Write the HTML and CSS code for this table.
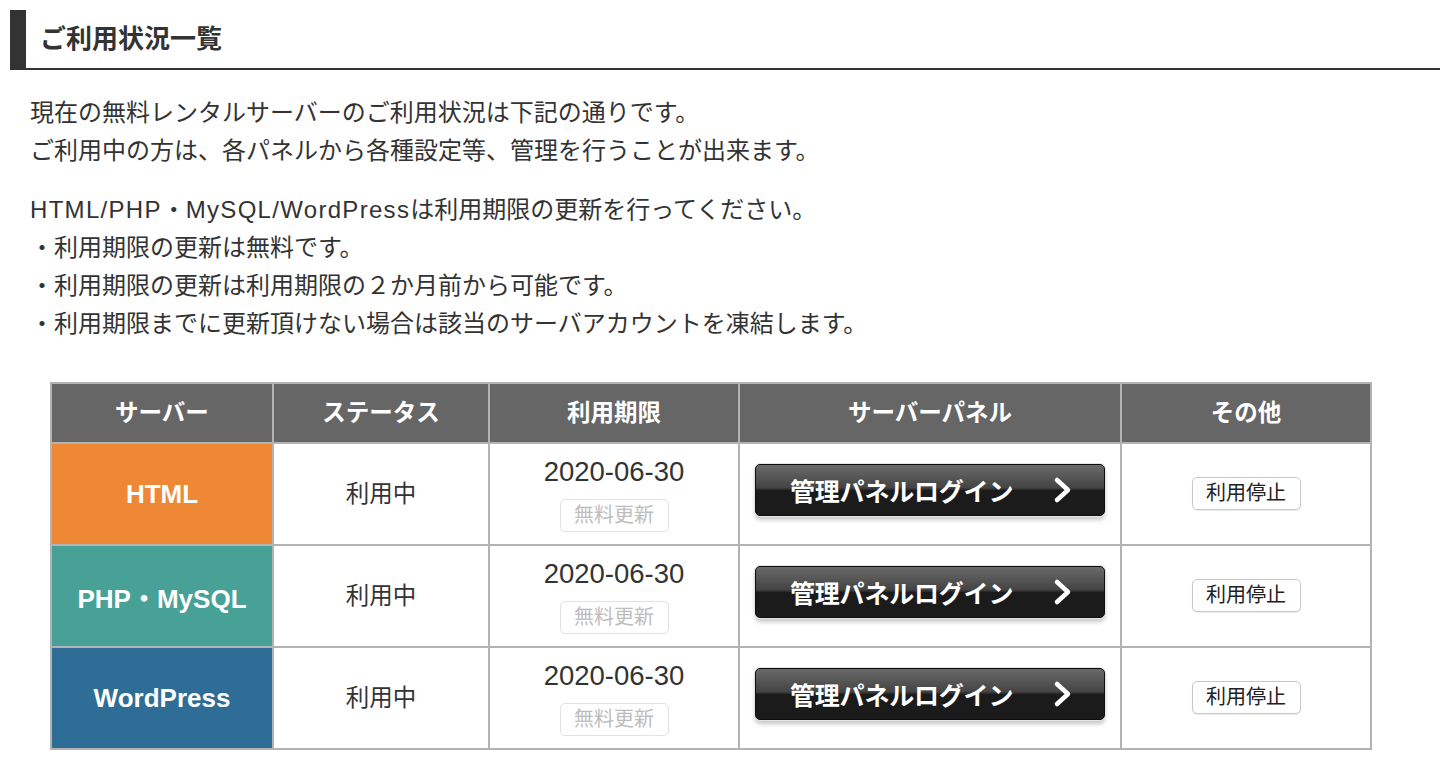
FILE: index.html
```html
<!DOCTYPE html>
<html lang="ja">
<head>
<meta charset="utf-8">
<title>ご利用状況一覧</title>
<link rel="stylesheet" href="styles.css">
</head>
<body>
<div class="page">
  <h2 class="heading">ご利用状況一覧</h2>
  <p class="lead">現在の無料レンタルサーバーのご利用状況は下記の通りです。<br>ご利用中の方は、各パネルから各種設定等、管理を行うことが出来ます。</p>
  <p class="lead second"><span class="latin">HTML/PHP</span>・<span class="latin">MySQL/WordPress</span>は利用期限の更新を行ってください。<br>・利用期限の更新は無料です。<br>・利用期限の更新は利用期限の２か月前から可能です。<br>・利用期限までに更新頂けない場合は該当のサーバアカウントを凍結します。</p>

  <table class="servers">
    <colgroup>
      <col class="c1"><col class="c2"><col class="c3"><col class="c4"><col class="c5">
    </colgroup>
    <thead>
      <tr><th>サーバー</th><th>ステータス</th><th>利用期限</th><th>サーバーパネル</th><th>その他</th></tr>
    </thead>
    <tbody>
      <tr>
        <td class="name html">HTML</td>
        <td class="status">利用中</td>
        <td class="limit"><div class="date">2020-06-30</div><button class="btn disabled" type="button">無料更新</button></td>
        <td class="panel"><a class="login" href="#"><span>管理パネルログイン</span><svg width="22" height="28" viewBox="0 0 22 28"><polyline points="5,4 16,14 5,24" fill="none" stroke="#fff" stroke-width="4.5" stroke-linecap="round" stroke-linejoin="round"/></svg></a></td>
        <td class="other"><button class="btn" type="button">利用停止</button></td>
      </tr>
      <tr>
        <td class="name php">PHP・MySQL</td>
        <td class="status">利用中</td>
        <td class="limit"><div class="date">2020-06-30</div><button class="btn disabled" type="button">無料更新</button></td>
        <td class="panel"><a class="login" href="#"><span>管理パネルログイン</span><svg width="22" height="28" viewBox="0 0 22 28"><polyline points="5,4 16,14 5,24" fill="none" stroke="#fff" stroke-width="4.5" stroke-linecap="round" stroke-linejoin="round"/></svg></a></td>
        <td class="other"><button class="btn" type="button">利用停止</button></td>
      </tr>
      <tr>
        <td class="name wp">WordPress</td>
        <td class="status">利用中</td>
        <td class="limit"><div class="date">2020-06-30</div><button class="btn disabled" type="button">無料更新</button></td>
        <td class="panel"><a class="login" href="#"><span>管理パネルログイン</span><svg width="22" height="28" viewBox="0 0 22 28"><polyline points="5,4 16,14 5,24" fill="none" stroke="#fff" stroke-width="4.5" stroke-linecap="round" stroke-linejoin="round"/></svg></a></td>
        <td class="other"><button class="btn" type="button">利用停止</button></td>
      </tr>
    </tbody>
  </table>
</div>
</body>
</html>
```
FILE: styles.css
```css
* { box-sizing: border-box; }
html, body { margin: 0; padding: 0; background: #fff; }
body {
  font-family: "Liberation Sans", "Noto Sans CJK JP", sans-serif;
  color: #333;
}
.page {
  padding: 10px 16px 20px 10px;
}
.heading {
  margin: 0;
  height: 60px;
  border-left: 16px solid #333;
  border-bottom: 2px solid #333;
  padding-left: 14px;
  font-size: 26px;
  font-weight: bold;
  line-height: 58px;
  color: #333;
}
.lead {
  margin: 24px 0 0 20px;
  font-size: 24px;
  line-height: 38px;
  color: #333;
}
.lead.second {
  margin-top: 21px;
}
.latin {
  letter-spacing: 1.3px;
}
.servers {
  margin: 39px 0 0 40px;
  border-collapse: collapse;
  table-layout: fixed;
  width: 1320px;
}
.c1 { width: 222px; }
.c2 { width: 216px; }
.c3 { width: 250px; }
.c4 { width: 382px; }
.c5 { width: 250px; }
.servers th, .servers td {
  border: 2px solid #b3b3b3;
  text-align: center;
  vertical-align: middle;
  padding: 0;
}
.servers th {
  background: #666;
  color: #fff;
  font-size: 23.5px;
  font-weight: bold;
  height: 60px;
  padding-bottom: 4px;
}
.servers td {
  height: 102px;
  font-size: 23.5px;
  color: #333;
}
.name {
  color: #fff !important;
  font-weight: bold;
  font-size: 26px !important;
}
.name.html { background: #ef8834; }
.name.php { background: #47a197; }
.name.wp { background: #2e6d96; }
.status { padding-bottom: 4px !important; }
.date {
  font-size: 27.5px;
  line-height: 30px;
  color: #333;
  margin-bottom: 12px;
}
.btn {
  font-family: "Liberation Sans", "Noto Sans CJK JP", sans-serif;
  font-size: 20px;
  line-height: 31px;
  height: 33px;
  width: 109px;
  padding: 0;
  background: #fff;
  color: #222;
  border: 1px solid #c8c8c8;
  border-radius: 5px;
  box-shadow: 0 1px 1px rgba(0,0,0,0.08);
  cursor: pointer;
}
.other .btn { margin-bottom: 2px; }
.btn.disabled {
  color: #bdbdbd;
  border-color: #e2e2e2;
  box-shadow: none;
}
.login {
  display: flex;
  align-items: center;
  justify-content: space-between;
  width: 350px;
  height: 52px;
  margin: 0 auto 8px;
  padding: 0 30px 0 34px;
  border: 1px solid #0e0e0e;
  border-radius: 5px;
  background: linear-gradient(#6a6a6a 0%, #444 45%, #2c2c2c 49%, #1b1b1b 51%, #1b1b1b 100%);
  box-shadow: 0 0 0 1px #e4e4e4, 0 4px 4px rgba(0,0,0,0.22);
  color: #fff;
  text-decoration: none;
  font-weight: bold;
  font-size: 25px;
  letter-spacing: -0.2px;
}
.login span { display: block; }
.login svg { display: block; }
```
